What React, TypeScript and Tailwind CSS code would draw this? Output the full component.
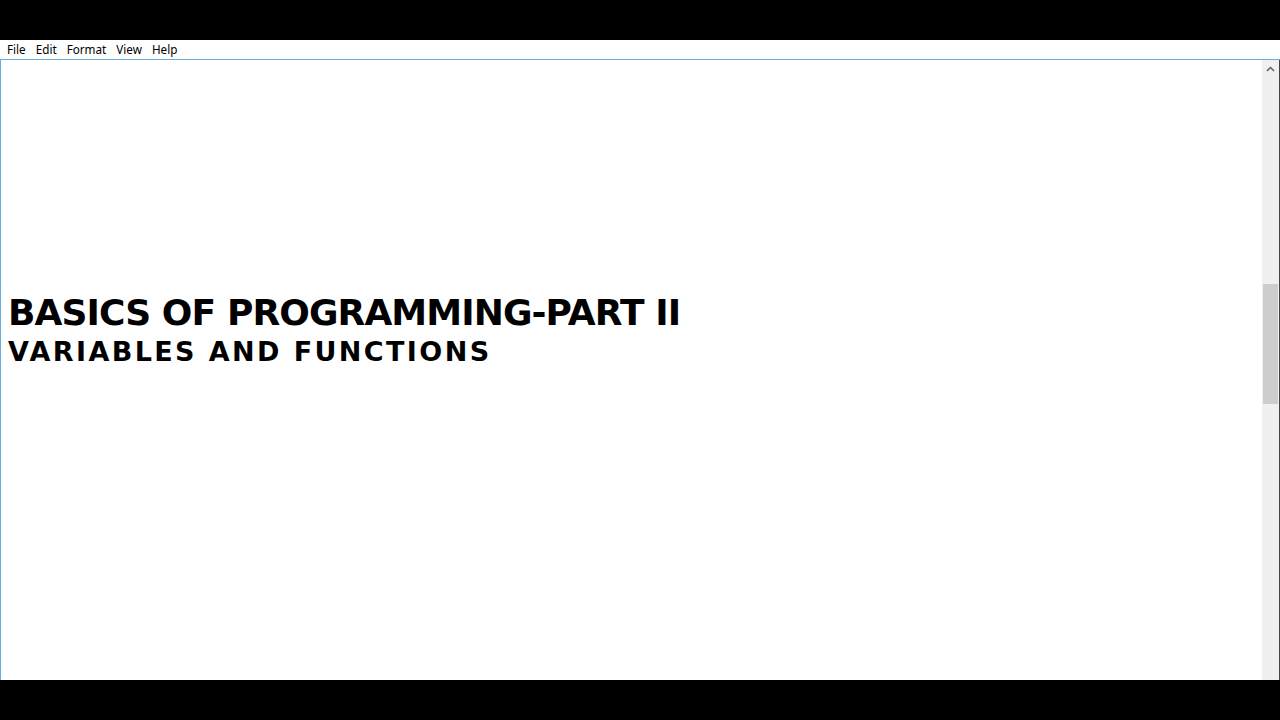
export default function App() {
  const menu = ['File', 'Edit', 'Format', 'View', 'Help']
  return (
    <div className="w-[1280px] h-[720px] bg-black flex flex-col overflow-hidden">
      <div className="h-[40px] flex-shrink-0" />
      <div className="h-[19px] bg-white flex items-center pl-[2px] flex-shrink-0 text-[11.7px] text-black" style={{ fontFamily: '"Noto Sans", "Liberation Sans", sans-serif' }}>
        {menu.map(m => (
          <span key={m} className="px-[5px] leading-none">{m}</span>
        ))}
      </div>
      <div className="h-[621px] flex-shrink-0 bg-white border-t border-l border-[#6aaedc] flex">
        <div className="flex-1 flex flex-col pt-[232px] pl-[7px]" style={{ fontFamily: '"DejaVu Sans", sans-serif' }}>
          <div className="text-[36px] font-bold leading-[42px] text-black tracking-[-0.9px]">BASICS OF PROGRAMMING-PART II</div>
          <div className="text-[27px] font-bold leading-[36px] text-black tracking-[2.4px]">VARIABLES AND FUNCTIONS</div>
        </div>
        <div className="w-[18px] bg-[#f0f0f0] flex flex-col border-r border-[#444]">
          <div className="h-[17px] flex items-center justify-center">
            <svg width="9" height="6" viewBox="0 0 9 6"><path d="M1 5 L4.5 1.5 L8 5" fill="none" stroke="#606060" strokeWidth="1.5" /></svg>
          </div>
          <div className="h-[207px]" />
          <div className="h-[120px] mx-[1px] bg-[#cdcdcd]" />
        </div>
      </div>
    </div>
  )
}
